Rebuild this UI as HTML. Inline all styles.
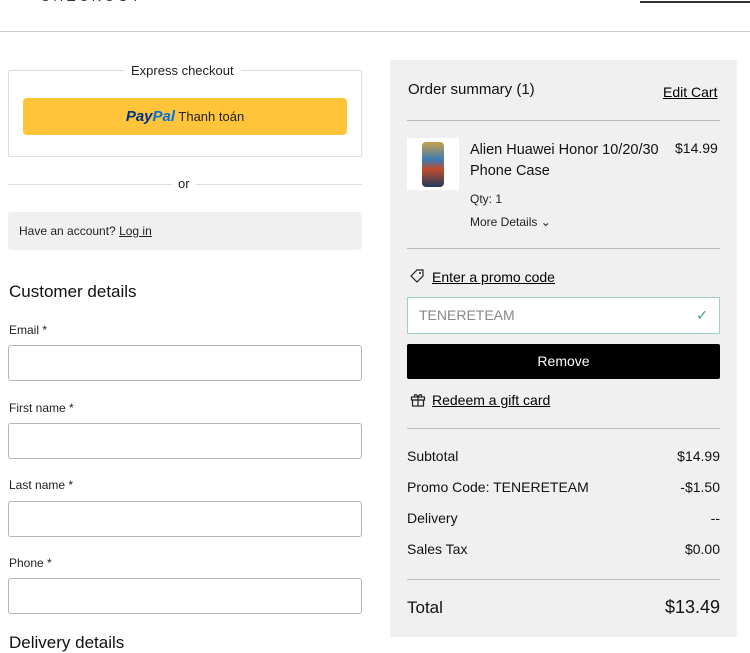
<!DOCTYPE html>
<html><head><meta charset="utf-8"><style>
*{box-sizing:border-box;margin:0;padding:0}
body{width:750px;height:649px;overflow:hidden;background:#fff;font-family:"Liberation Sans",sans-serif;color:#000;position:relative}
.a{position:absolute}
.inp{position:absolute;left:8px;width:354px;height:36px;border:1px solid #b5b5b5;border-radius:3px;background:#fff}
.lbl{position:absolute;left:9px;font-size:12px;color:#222}
u{text-decoration:underline}
</style></head><body>
<div class="a" style="left:40px;top:-12px;font-size:14px;letter-spacing:3px;color:#333">CHECKOUT</div>
<div class="a" style="left:640px;top:1px;width:110px;height:2px;background:#333"></div>
<div class="a" style="left:0;top:31px;width:750px;height:1px;background:#ccc"></div>

<div class="a" style="left:8px;top:70px;width:354px;height:87px;border:1px solid #ddd;border-radius:2px"></div>
<div class="a" style="left:124px;top:63px;background:#fff;padding:0 7px;font-size:13px;color:#222">Express checkout</div>
<div class="a" style="left:23px;top:98px;width:324px;height:37px;background:#ffc439;border-radius:4px;text-align:center;line-height:37px;font-size:13px;color:#222"><b style="font-style:italic;color:#003087;font-size:15px">Pay</b><b style="font-style:italic;color:#0070e0;font-size:15px">Pal</b> Thanh toán</div>
<div class="a" style="left:8px;top:184px;width:354px;height:1px;background:#ddd"></div>
<div class="a" style="left:172px;top:176px;background:#fff;padding:0 6px;font-size:13px;color:#222">or</div>
<div class="a" style="left:8px;top:212px;width:354px;height:38px;background:#f0f0f0;border-radius:3px;font-size:12px;line-height:38px;padding-left:11px;color:#222">Have an account? <u>Log in</u></div>

<div class="a" style="left:9px;top:282px;font-size:17px;color:#111">Customer details</div>
<div class="lbl" style="top:323px">Email *</div>
<div class="inp" style="top:345px"></div>
<div class="lbl" style="top:401px">First name *</div>
<div class="inp" style="top:423px"></div>
<div class="lbl" style="top:478px">Last name *</div>
<div class="inp" style="top:501px"></div>
<div class="lbl" style="top:556px">Phone *</div>
<div class="inp" style="top:578px"></div>
<div class="a" style="left:9px;top:633px;font-size:17px;color:#111">Delivery details</div>

<div class="a" style="left:390px;top:60px;width:347px;height:577px;background:#f0f0f0"></div>
<div class="a" style="left:408px;top:81px;font-size:15px;color:#111">Order summary (1)</div>
<div class="a" style="left:663px;top:84px;font-size:14px"><u>Edit Cart</u></div>
<div class="a" style="left:407px;top:120px;width:313px;height:1px;background:#bbb"></div>
<div class="a" style="left:407px;top:138px;width:52px;height:52px;background:#fff"><div style="margin:4px auto;width:22px;height:45px;border-radius:4px;background:linear-gradient(#c9a04a,#3a7bb5 40%,#c24a2a 60%,#1f3d5c)"></div></div>
<div class="a" style="left:470px;top:140px;font-size:14.5px;line-height:21px;color:#111">Alien Huawei Honor 10/20/30<br>Phone Case</div>
<div class="a" style="left:675px;top:140px;font-size:14px;color:#111">$14.99</div>
<div class="a" style="left:470px;top:192px;font-size:12px;color:#222">Qty: 1</div>
<div class="a" style="left:470px;top:215px;font-size:12px;color:#222">More Details &#8964;</div>
<div class="a" style="left:407px;top:248px;width:313px;height:1px;background:#bbb"></div>
<svg class="a" style="left:409px;top:268px" width="16" height="16" viewBox="0 0 16 16"><path d="M2 8 8 2h6v6l-6 6z" fill="none" stroke="#222" stroke-width="1.2"/><circle cx="11" cy="5" r="1" fill="#222"/></svg>
<div class="a" style="left:432px;top:269px;font-size:14px"><u>Enter a promo code</u></div>
<div class="a" style="left:407px;top:297px;width:313px;height:37px;border:1px solid #9fd3c0;background:#fff;font-size:14px;line-height:35px;padding-left:11px;color:#888">TENERETEAM<span style="position:absolute;right:11px;color:#3a9e7e">&#10003;</span></div>
<div class="a" style="left:407px;top:344px;width:313px;height:35px;background:#000;border-radius:2px;color:#fff;text-align:center;line-height:35px;font-size:14px">Remove</div>
<svg class="a" style="left:410px;top:392px" width="16" height="16" viewBox="0 0 16 16" fill="none" stroke="#222" stroke-width="1.2"><rect x="1.5" y="5" width="13" height="3"/><rect x="2.5" y="8" width="11" height="6"/><path d="M8 5v9M8 5C6 1 3 3 5 5M8 5c2-4 5-2 3 0"/></svg>
<div class="a" style="left:432px;top:392px;font-size:14px"><u>Redeem a gift card</u></div>
<div class="a" style="left:407px;top:428px;width:313px;height:1px;background:#bbb"></div>
<div class="a" style="left:407px;top:441px;font-size:14px;line-height:31px;color:#111">Subtotal<br>Promo Code: TENERETEAM<br>Delivery<br>Sales Tax</div>
<div class="a" style="left:600px;width:120px;text-align:right;top:441px;font-size:14px;line-height:31px;color:#111">$14.99<br>-$1.50<br>--<br>$0.00</div>
<div class="a" style="left:407px;top:579px;width:313px;height:1px;background:#bbb"></div>
<div class="a" style="left:407px;top:598px;font-size:17px;color:#111">Total</div>
<div class="a" style="left:600px;width:120px;text-align:right;top:597px;font-size:18px;color:#111">$13.49</div>
</body></html>
